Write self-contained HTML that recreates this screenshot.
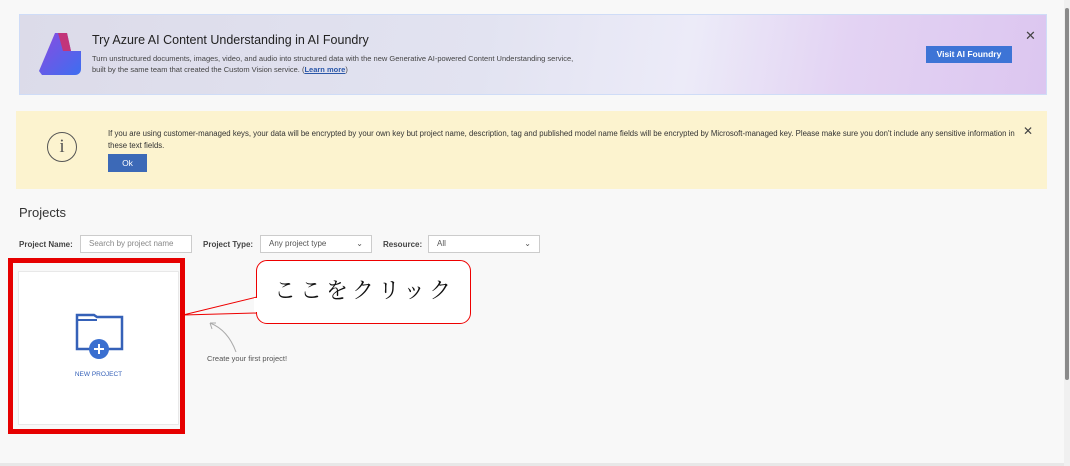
<!DOCTYPE html>
<html><head><meta charset="utf-8"><style>
*{box-sizing:border-box;margin:0;padding:0}
body{width:1070px;height:466px;background:#f8f8f8;font-family:"Liberation Sans",sans-serif;position:relative;overflow:hidden;color:#333}
.abs{position:absolute}
.banner{left:19px;top:14px;width:1028px;height:81px;border:1px solid #cfdcf7;background:linear-gradient(100deg,#dcdbe9 0%,#e2e3f1 45%,#ecebf8 65%,#e3d3f3 80%,#dcc6f0 100%);overflow:hidden}
.btn{background:#3d74d6;color:#fff;font-weight:bold;font-size:8.5px;text-align:center}
.warn{left:16px;top:111px;width:1031px;height:78px;background:#fcf3cf}
.sel{background:#fff;border:1px solid #ccc;font-size:8px;padding:0 8px;line-height:15px;color:#555}
.lbl{font-size:8px;font-weight:bold;color:#444}
</style></head><body>
<div class="abs banner">
 <svg class="abs" style="left:18px;top:16px" width="48" height="46" viewBox="0 0 48 46"><defs><linearGradient id="g" x1="0" y1="0" x2="1" y2="1"><stop offset="0" stop-color="#8b4be0"/><stop offset="1" stop-color="#3d6ef0"/></linearGradient></defs><path d="M17 2h12l4 18h10v18c0 3-2 6-6 6H4L1 40 17 2z" fill="url(#g)"/><path d="M20 2h9l4 18h-8z" fill="#c2357a"/></svg>
 <div class="abs" style="left:72px;top:18px;font-size:12.5px;color:#222">Try Azure AI Content Understanding in AI Foundry</div>
 <div class="abs" style="left:72px;top:38px;font-size:7.5px;line-height:11px;color:#444">Turn unstructured documents, images, video, and audio into structured data with the new Generative AI-powered Content Understanding service,<br>built by the same team that created the Custom Vision service. (<span style="color:#2b57a8;text-decoration:underline;font-weight:bold">Learn more</span>)</div>
 <div class="abs btn" style="left:906px;top:31px;width:86px;height:17px;line-height:17px">Visit AI Foundry</div>
 <div class="abs" style="left:1005px;top:13px;font-size:13px;color:#444">✕</div>
</div>
<div class="abs warn">
 <div class="abs" style="left:31px;top:21px;width:30px;height:30px;border:1.5px solid #555;border-radius:50%;text-align:center;line-height:27px;font-size:19px;color:#555;font-family:'Liberation Serif',serif">i</div>
 <div class="abs" style="left:92px;top:17px;font-size:7.8px;line-height:12px;color:#333;width:925px">If you are using customer-managed keys, your data will be encrypted by your own key but project name, description, tag and published model name fields will be encrypted by Microsoft-managed key. Please make sure you don't include any sensitive information in these text fields.</div>
 <div class="abs btn" style="left:92px;top:43px;width:39px;height:18px;line-height:18px;font-weight:normal;background:#3c69b7">Ok</div>
 <div class="abs" style="left:1007px;top:13px;font-size:12px;color:#444">✕</div>
</div>
<div class="abs" style="left:19px;top:205px;font-size:13px;color:#333">Projects</div>
<div class="abs lbl" style="left:19px;top:240px">Project Name:</div>
<div class="abs sel" style="left:80px;top:235px;width:112px;height:18px;line-height:16px;color:#888">Search by project name</div>
<div class="abs lbl" style="left:203px;top:240px">Project Type:</div>
<div class="abs sel" style="left:260px;top:235px;width:112px;height:18px;line-height:16px">Any project type<span style="float:right">⌄</span></div>
<div class="abs lbl" style="left:383px;top:240px">Resource:</div>
<div class="abs sel" style="left:428px;top:235px;width:112px;height:18px;line-height:16px">All<span style="float:right">⌄</span></div>
<div class="abs" style="left:8px;top:258px;width:177px;height:176px;border:5px solid #e60000"></div>
<div class="abs" style="left:18px;top:271px;width:161px;height:154px;background:#fff;border:1px solid #e8e8e8"></div>
<svg class="abs" style="left:74px;top:312px" width="50" height="50" viewBox="0 0 50 50"><path d="M3 3h17l3 2h25v32H3z" fill="none" stroke="#3561b8" stroke-width="2.5"/><path d="M3 8h20" stroke="#3561b8" stroke-width="2"/><circle cx="25" cy="37" r="10" fill="#3a6fd0"/><path d="M25 32v10M20 37h10" stroke="#fff" stroke-width="2"/></svg>
<div class="abs" style="left:18px;top:371px;width:161px;text-align:center;font-size:6.5px;color:#3561b8">NEW PROJECT</div>
<svg class="abs" style="left:0;top:0" width="560" height="466"><path d="M183 315L257 297M183 315L257 313" stroke="#e00" stroke-width="1" fill="none"/><path d="M236 352Q228 330 210 323M210 323l2 6M210 323l6 0" stroke="#aaa" fill="none" stroke-width="1"/></svg>
<div class="abs" style="left:256px;top:260px;width:215px;height:64px;border:1px solid #e00;border-radius:11px;background:#fff"></div>
<svg class="abs" style="left:254px;top:298px" width="6" height="14"><rect x="0" y="0" width="6" height="14" fill="#fff"/></svg>
<div class="abs" style="left:274px;top:274px;font-size:22px;letter-spacing:4px;color:#111;font-family:'Noto Serif CJK SC','Noto Sans CJK JP',serif">ここをクリック</div>
<div class="abs" style="left:207px;top:354px;font-size:7.5px;color:#555">Create your first project!</div>
<div class="abs" style="left:0;top:463px;width:1064px;height:3px;background:#e8e8e8"></div>
<div class="abs" style="left:1064px;top:0;width:6px;height:466px;background:#f0f0f0"></div>
<div class="abs" style="left:1065px;top:8px;width:4px;height:372px;background:#8a8a8a;border-radius:2px"></div>
</body></html>
